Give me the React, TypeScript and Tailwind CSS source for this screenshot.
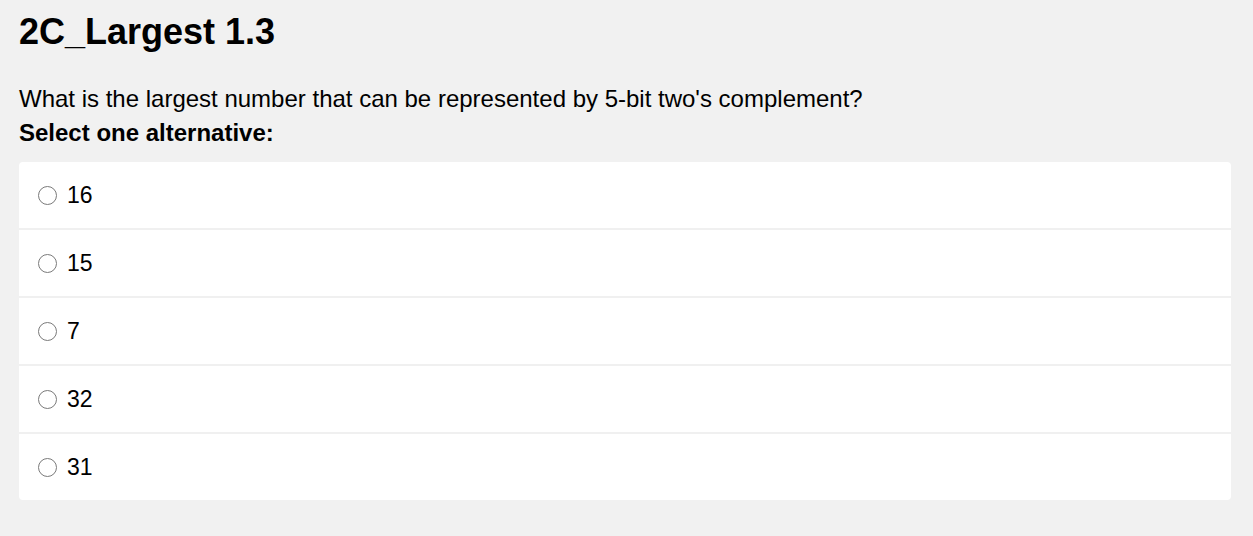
import React from "react";

const options = ["16", "15", "7", "32", "31"];

export default function App() {
  return (
    <div
      className="min-h-[536px] w-full bg-[#f1f1f1] pl-[19px] pr-[22px] text-black"
      style={{ fontFamily: '"Liberation Sans", Arial, sans-serif' }}
    >
      <h1 className="pt-[12px] text-[36px] font-bold leading-[40px]">2C_Largest 1.3</h1>
      <p className="mt-[33px] text-[24px] leading-[28px]">
        What is the largest number that can be represented by 5-bit two's complement?
      </p>
      <p className="mt-[6px] text-[24px] font-bold leading-[28px]">Select one alternative:</p>
      <div className="mt-[15px] overflow-hidden rounded-[4px] bg-white">
        {options.map((o, i) => (
          <div
            key={o}
            className={
              "flex items-center pl-[19px] " +
              (i > 0 ? "h-[68px] border-t-2 border-[#f0f0f0]" : "h-[66px]")
            }
          >
            <span className="box-border h-[19px] w-[19px] rounded-full border-[1.5px] border-[#7a7a7a] bg-white" />
            <span className="ml-[10px] text-[23px] leading-[26px]">{o}</span>
          </div>
        ))}
      </div>
    </div>
  );
}
